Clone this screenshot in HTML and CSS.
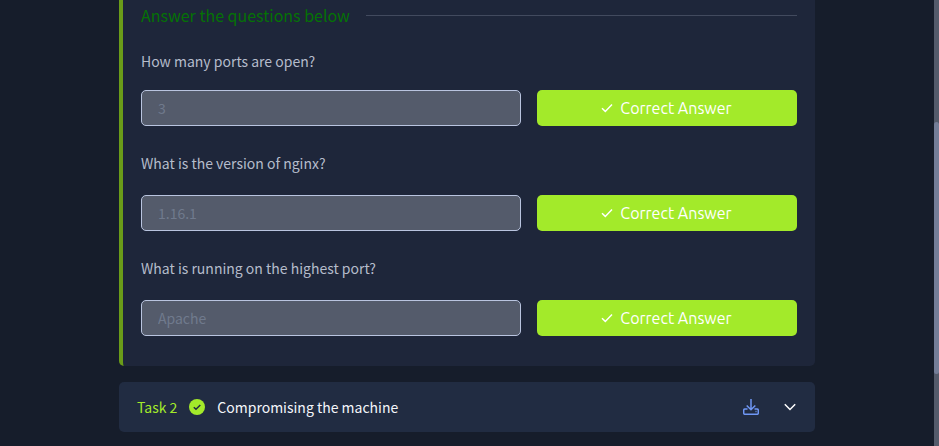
FILE: index.html
```
<!DOCTYPE html>
<html lang="en">
<head>
    <meta charset="utf-8">
    <title>Room tasks</title>
    <meta name="viewport" content="width=device-width, initial-scale=1.0">
    <link rel="stylesheet" href="styles.css">
</head>
<body>
    <main class="room">
        <section class="task-open">
            <h2 class="divider">Answer the questions below</h2>

            <form class="question">
                <label for="q1">How many ports are open?</label>
                <div class="answer-row">
                    <input id="q1" type="text" placeholder="3" disabled>
                    <button type="button" class="correct-btn">
                        <svg width="12" height="10" viewBox="0 0 12 10"><path d="M1 5.2L4.3 8.4L11 1.5"/></svg>
                        Correct Answer
                    </button>
                </div>
            </form>

            <form class="question">
                <label for="q2">What is the version of nginx?</label>
                <div class="answer-row">
                    <input id="q2" type="text" placeholder="1.16.1" disabled>
                    <button type="button" class="correct-btn">
                        <svg width="12" height="10" viewBox="0 0 12 10"><path d="M1 5.2L4.3 8.4L11 1.5"/></svg>
                        Correct Answer
                    </button>
                </div>
            </form>

            <form class="question">
                <label for="q3">What is running on the highest port?</label>
                <div class="answer-row">
                    <input id="q3" type="text" placeholder="Apache" disabled>
                    <button type="button" class="correct-btn">
                        <svg width="12" height="10" viewBox="0 0 12 10"><path d="M1 5.2L4.3 8.4L11 1.5"/></svg>
                        Correct Answer
                    </button>
                </div>
            </form>
        </section>

        <section class="task-card">
            <span class="task-number">Task 2</span>
            <svg class="done" width="16" height="16" viewBox="0 0 16 16"><circle cx="8" cy="8" r="8"/><path d="M4.8 8.2L7 10.3L11.3 6"/></svg>
            <h3>Compromising the machine</h3>
            <button type="button" class="icon-btn download" aria-label="Download task files">
                <svg width="16" height="16" viewBox="0 0 16 16">
                    <path d="M8 0V10.5M3.7 6.5L8 10.7L12.3 6.5"/>
                    <path d="M4.5 10H2Q0.7 10 0.7 11.3V14Q0.7 15.3 2 15.3H14Q15.3 15.3 15.3 14V11.3Q15.3 10 14 10H11.5M12.5 12.6H13.5"/>
                </svg>
            </button>
            <button type="button" class="icon-btn" aria-label="Expand task">
                <svg width="12" height="8" viewBox="0 0 12 8"><path d="M0.8 1.3L6 6.5L11.2 1.3"/></svg>
            </button>
        </section>
    </main>

    <div class="scroll-track"><div class="scroll-thumb"></div></div>
</body>
</html>
```
FILE: styles.css
```
* { box-sizing: border-box; }
body { margin: 0; padding-right: 5px; background: #161d2b; color: #b5bccb; font-family: "Noto Sans CJK SC", "Noto Sans", sans-serif; font-size: 14px; line-height: 24px; }
svg { fill: none; stroke: currentColor; stroke-width: 1.5; flex-shrink: 0; }
.room { max-width: 696px; margin: 0 auto; padding-bottom: 14px; }

.task-open { background: #1e263a; border-left: 4px solid #6a9c19; border-radius: 0 0 5px 5px; padding: 0 18px 30px; }
.divider { display: flex; align-items: center; gap: 16px; margin: 0 0 19px; color: #057205; font-size: 16px; font-weight: 400; line-height: 30px; }
.divider::after { content: ""; flex: 1; height: 1px; background: #424a5e; }

.question { margin: 0 0 25px; }
.question:last-child { margin-bottom: 0; }
.question label { display: block; margin-bottom: 20px; }
.question:first-of-type label { margin-bottom: 17px; }
.answer-row { display: grid; grid-template-columns: 380fr 260fr; gap: 16px; }
.answer-row input { width: 100%; height: 36px; padding: 0 16px 1px; background: #545b6b; border: 1px solid #b9c4df; border-radius: 5px; font: inherit; }
.answer-row input::placeholder { color: #707a8d; opacity: 1; }
.correct-btn { display: flex; align-items: center; justify-content: center; gap: 7px; height: 36px; padding: 0 1px 0 0; background: #a3ea2a; color: #fff; border: none; border-radius: 5px; font-family: Ubuntu, "Noto Sans", sans-serif; font-size: 16px; cursor: pointer; }

.task-card { display: flex; align-items: center; height: 50px; margin-top: 16px; padding: 0 19px 0 18px; background: #212c42; border-radius: 5px; }
.task-number { color: #a3ea2a; }
.done { margin: 0 12px; fill: #a3ea2a; stroke: none; }
.done path { fill: none; stroke: #212c42; }
.task-card h3 { flex: 1; margin: 0; color: #f4f6fa; font-size: 14px; font-weight: 400; }
.icon-btn { display: flex; padding: 0; background: none; border: none; color: #fff; cursor: pointer; }
.download { margin-right: 25px; color: #6f97f5; }

.scroll-track { position: fixed; top: 0; right: 0; bottom: 0; width: 5px; padding-top: 122px; background: #545b6b; }
.scroll-thumb { height: 252px; background: #747e98; border-radius: 5px; }
```
